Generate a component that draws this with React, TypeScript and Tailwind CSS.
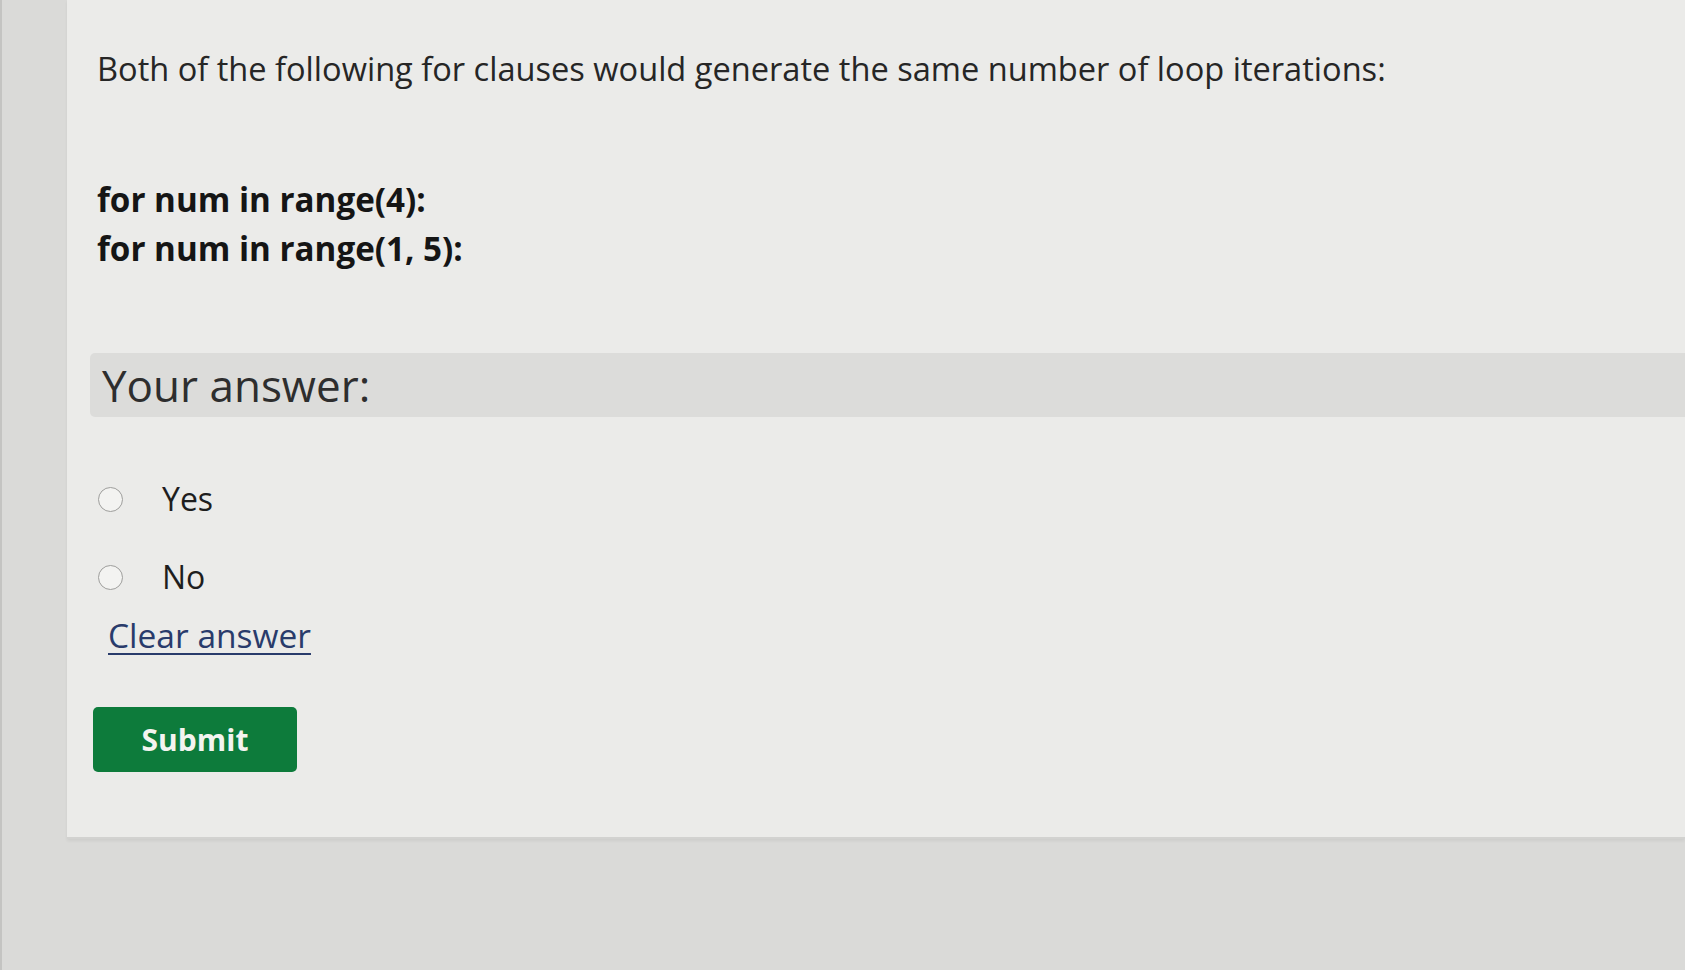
import React, { useState } from "react";

const options = ["Yes", "No"];

const App: React.FC = () => {
    const [answer, setAnswer] = useState<string | null>(null);

    return (
        <div
            className="min-h-[970px] w-full overflow-hidden bg-[#dadad8] border-l-2 border-[#c4c4c2]"
            style={{ fontFamily: '"Open Sans", "Noto Sans", sans-serif' }}
        >
            <div className="ml-[65px] bg-[#ebebe9] pt-[47px] pb-[65px] pl-[23px] border-b-2 border-[#d2d2d0] shadow-[0_2px_3px_rgba(0,0,0,0.06)]">
                {/* Question */}
                <p className="pl-[7px] text-[32.6px] leading-[44px] text-[#262626] whitespace-nowrap">
                    Both of the following for clauses would generate the same number of loop iterations:
                </p>

                <div className="mt-[84px] pl-[7px] text-[33.2px] leading-[49px] font-bold text-[#151515]">
                    <div>for num in range(4):</div>
                    <div>for num in range(1, 5):</div>
                </div>

                {/* Answer header */}
                <div className="mt-[80px] h-[64px] rounded-l-[5px] bg-[#dcdcda] pl-[12px] text-[44px] leading-[64px] text-[#2e2e2e]">
                    Your answer:
                </div>

                {/* Options */}
                <div className="mt-[61px] flex flex-col gap-[36px] pl-[8px]">
                    {options.map((opt) => (
                        <label key={opt} className="flex h-[42px] cursor-pointer items-center">
                            <span className="flex h-[25px] w-[25px] items-center justify-center rounded-full border-[1.5px] border-[#9e9e9c] bg-[#f3f3f1]">
                                {answer === opt && <span className="h-[13px] w-[13px] rounded-full bg-[#2b3b6b]" />}
                            </span>
                            <input
                                type="radio"
                                name="answer"
                                className="hidden"
                                checked={answer === opt}
                                onChange={() => setAnswer(opt)}
                            />
                            <span className="ml-[39px] text-[32px] leading-[42px] text-[#1e1e1e]">{opt}</span>
                        </label>
                    ))}
                </div>

                <button
                    className="ml-[18px] mt-[15px] block text-[33.5px] leading-[44px] text-[#293b6b] underline decoration-[2px] underline-offset-[5px]"
                    onClick={() => setAnswer(null)}
                >
                    Clear answer
                </button>

                <button className="mt-[50px] ml-[3px] flex h-[65px] w-[204px] items-center justify-center rounded-[5px] bg-[#0d7b3b] text-[30px] font-bold text-[#f4f4f0]">
                    Submit
                </button>
            </div>
        </div>
    );
};

export default App;
